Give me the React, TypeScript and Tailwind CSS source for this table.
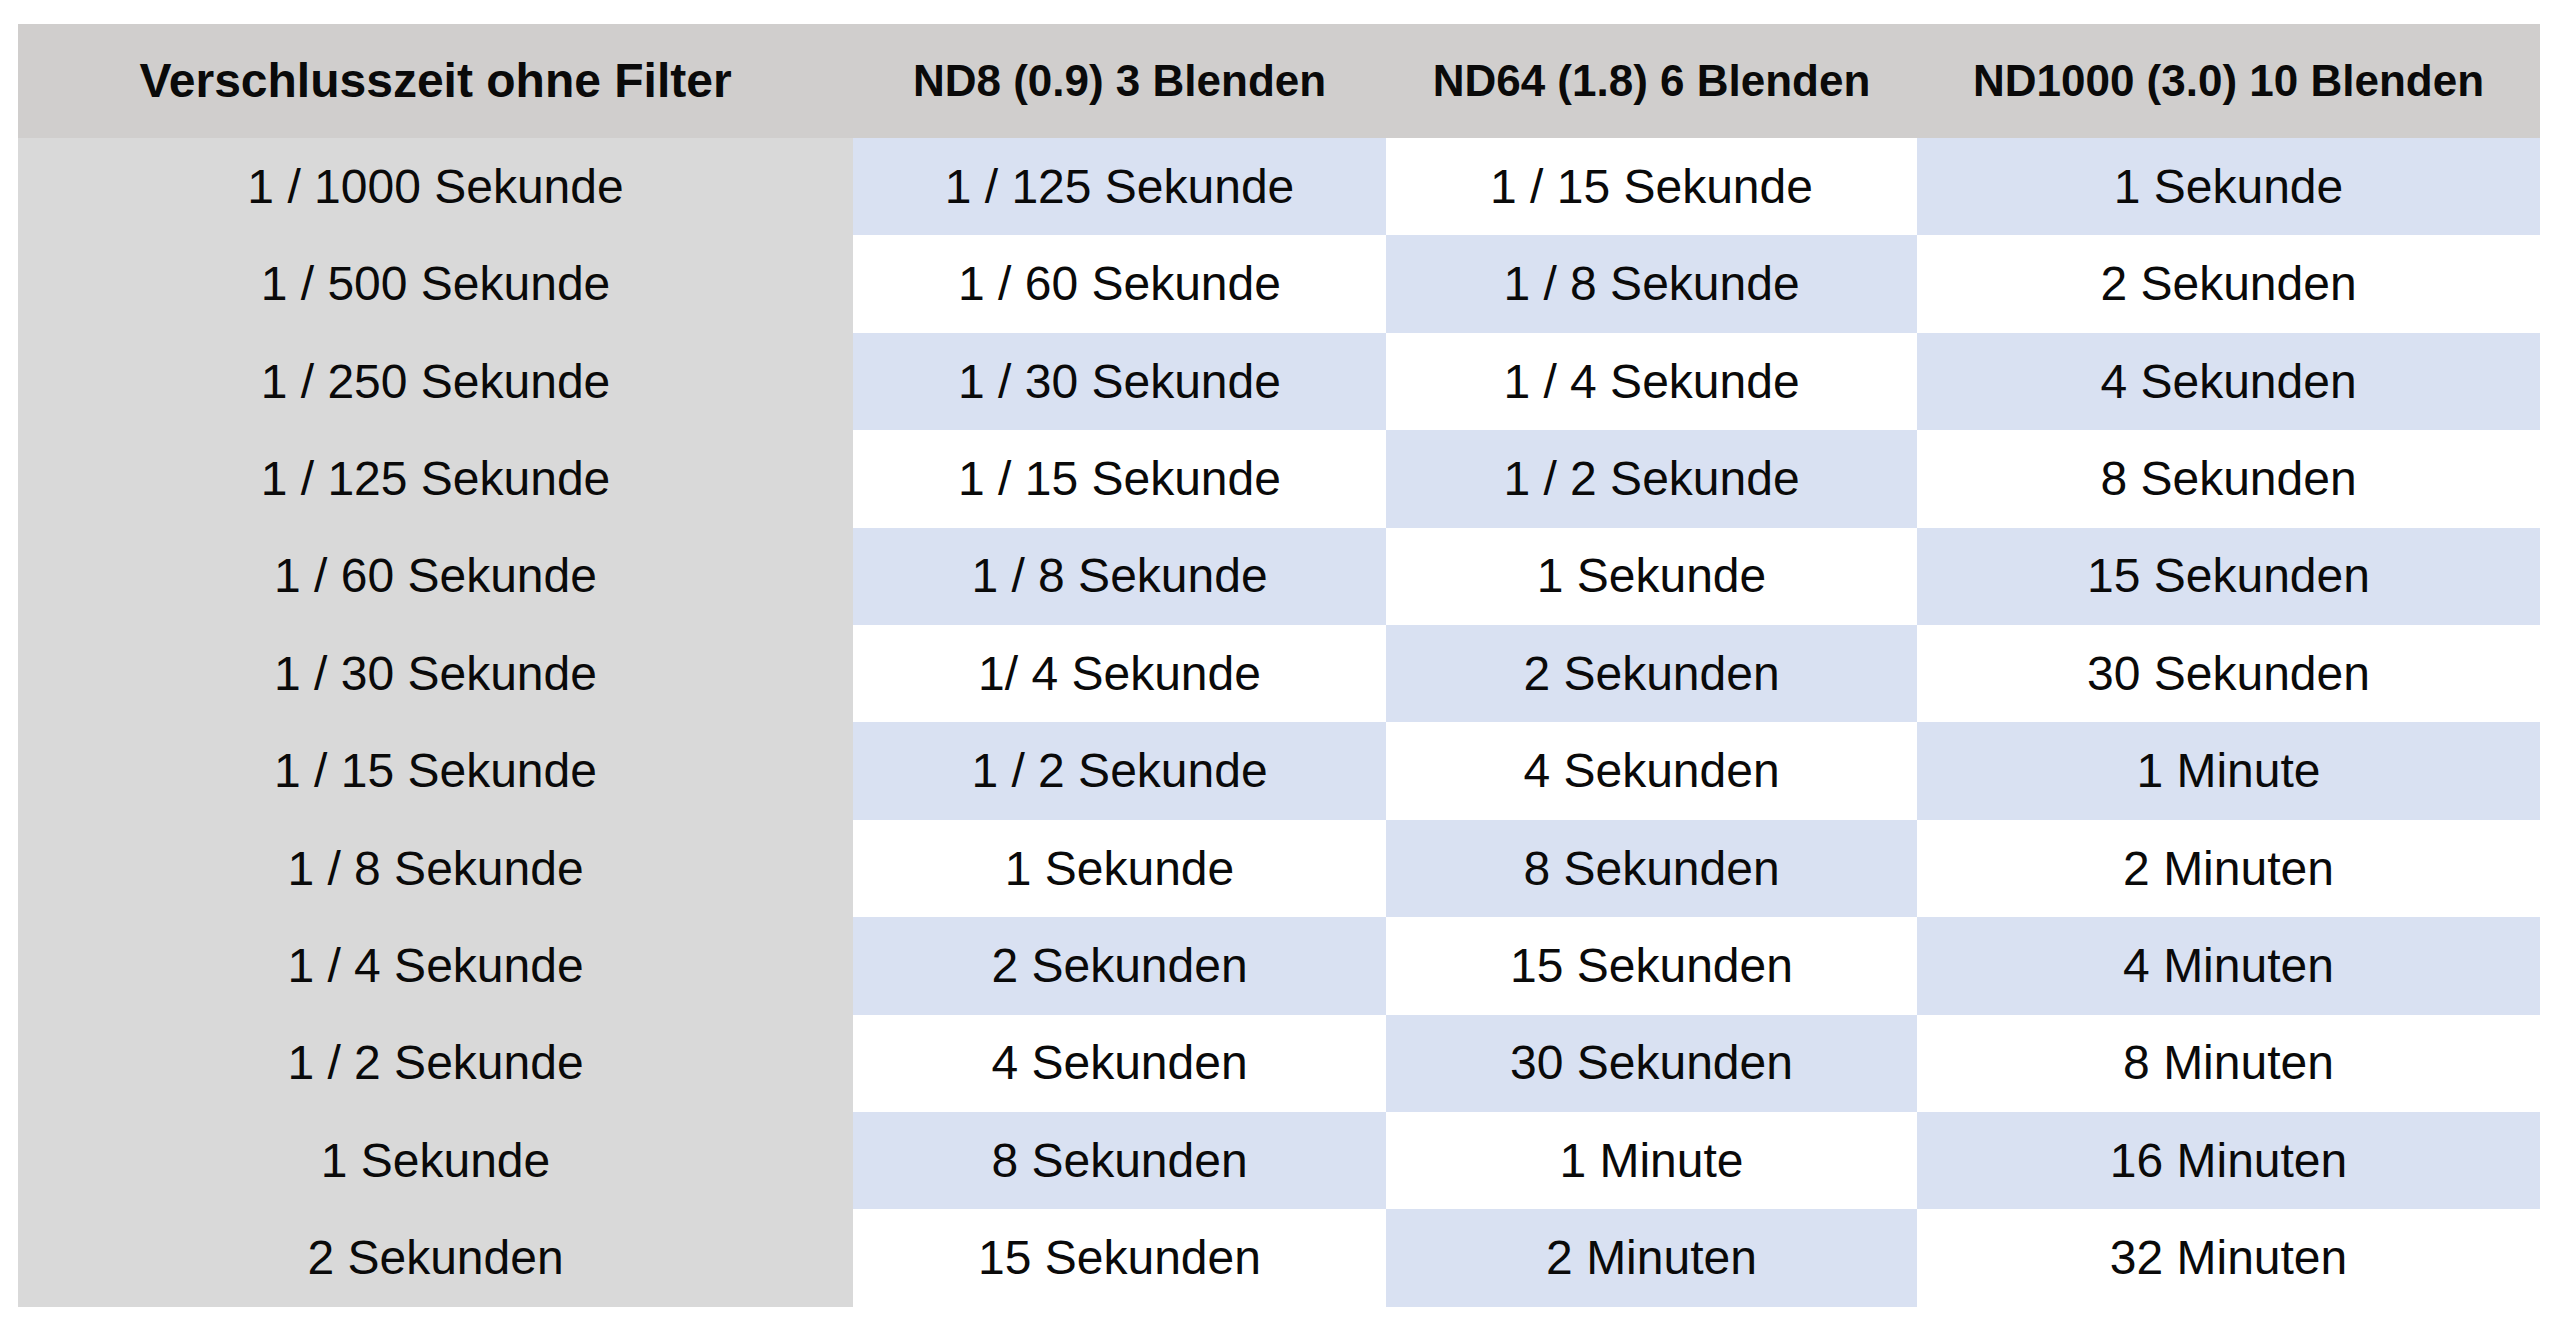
const headers = [
  "Verschlusszeit ohne Filter",
  "ND8 (0.9) 3 Blenden",
  "ND64 (1.8) 6 Blenden",
  "ND1000 (3.0) 10 Blenden",
]

const rows = [
  ["1 / 1000 Sekunde", "1 / 125 Sekunde", "1 / 15 Sekunde", "1 Sekunde"],
  ["1 / 500 Sekunde", "1 / 60 Sekunde", "1 / 8 Sekunde", "2 Sekunden"],
  ["1 / 250 Sekunde", "1 / 30 Sekunde", "1 / 4 Sekunde", "4 Sekunden"],
  ["1 / 125 Sekunde", "1 / 15 Sekunde", "1 / 2 Sekunde", "8 Sekunden"],
  ["1 / 60 Sekunde", "1 / 8 Sekunde", "1 Sekunde", "15 Sekunden"],
  ["1 / 30 Sekunde", "1/ 4 Sekunde", "2 Sekunden", "30 Sekunden"],
  ["1 / 15 Sekunde", "1 / 2 Sekunde", "4 Sekunden", "1 Minute"],
  ["1 / 8 Sekunde", "1 Sekunde", "8 Sekunden", "2 Minuten"],
  ["1 / 4 Sekunde", "2 Sekunden", "15 Sekunden", "4 Minuten"],
  ["1 / 2 Sekunde", "4 Sekunden", "30 Sekunden", "8 Minuten"],
  ["1 Sekunde", "8 Sekunden", "1 Minute", "16 Minuten"],
  ["2 Sekunden", "15 Sekunden", "2 Minuten", "32 Minuten"],
]

function cellBg(row: number, col: number) {
  if (col === 0) return "bg-[#d9d9d9]"
  // checkerboard over the filter columns
  return (row + col) % 2 === 1 ? "bg-[#d9e1f2]" : "bg-white"
}

export default function App() {
  return (
    <div className="min-h-screen bg-white pt-[24px] pl-[18px] font-['Liberation_Sans',Arial,sans-serif] text-[#0a0a0a]">
      <div className="grid w-[2522px] grid-cols-[835px_533px_531px_623px] grid-rows-[114px_repeat(12,97.42px)]">
        {/* Header */}
        {headers.map((h, i) => (
          <div
            key={h}
            className={`flex items-center justify-center bg-[#d0cecd] font-bold ${
              i === 0 ? "text-[48px]" : "text-[44px]"
            }`}
          >
            {h}
          </div>
        ))}

        {/* Body */}
        {rows.map((row, r) =>
          row.map((value, c) => (
            <div
              key={`${r}-${c}`}
              className={`flex items-center justify-center text-[48px] ${cellBg(r, c)}`}
            >
              {value}
            </div>
          ))
        )}
      </div>
    </div>
  )
}
